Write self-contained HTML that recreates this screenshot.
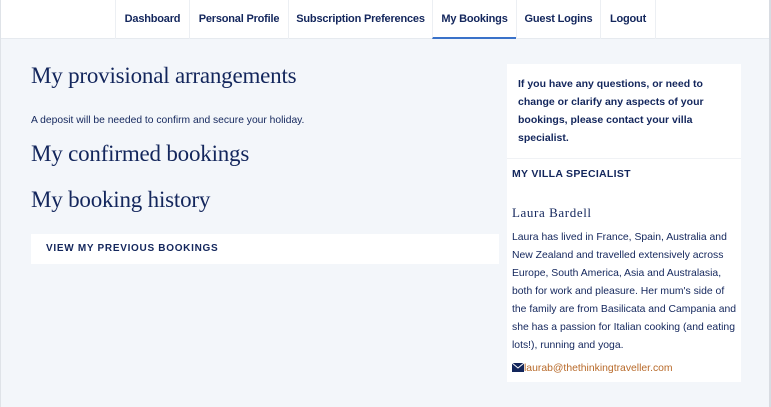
<!DOCTYPE html>
<html><head><style>
*{margin:0;padding:0;box-sizing:border-box}
body{width:771px;height:407px;background:#f3f6fa;font-family:"Liberation Sans",sans-serif;color:#13265c;position:relative;overflow:hidden;border-left:1px solid #dfe3e8;border-right:2px solid #d8dce2}
.nav{position:absolute;top:0;left:0;width:768px;height:39px;background:#fff;border-bottom:1px solid #e6eaef}
.nav a{position:absolute;top:0;height:39px;line-height:38px;font-size:11px;font-weight:bold;text-align:center;border-left:1px solid #eceff3;color:#13265c;letter-spacing:-0.2px}
.nav a.act{border-bottom:2px solid #3a72c9}
h2{position:absolute;left:30px;font-family:"Liberation Serif",serif;font-weight:normal;font-size:23px;color:#13265c;letter-spacing:-0.2px}
.p{position:absolute;left:30px;top:115px;font-size:10.3px}
.btn{position:absolute;left:30px;top:234px;width:468px;height:30px;background:#fff;font-size:10px;font-weight:bold;letter-spacing:.7px;line-height:30px;padding-left:15px}
.box{position:absolute;left:506px;top:64px;width:234px;height:318px;background:#fff}
.q{padding:11px 8px 0 11px;font-size:10.5px;font-weight:bold;line-height:18px;height:95px;border-bottom:1px solid #f0f2f5}
.sp{position:absolute;top:104px;left:5px;font-size:10.5px;font-weight:bold;letter-spacing:.3px}
.nm{position:absolute;top:141px;left:5px;font-family:"Liberation Serif",serif;font-size:13px;letter-spacing:.6px}
.bio{position:absolute;top:165px;left:5px;width:226px;font-size:10.4px;line-height:18px}
.em{position:absolute;top:299px;left:5px;font-size:10.4px;color:#b86a2a}
</style></head><body>
<div class="nav">
<a style="left:114px;width:74px">Dashboard</a>
<a style="left:188px;width:99px">Personal Profile</a>
<a style="left:287px;width:144px">Subscription Preferences</a>
<a class="act" style="left:431px;width:84px">My Bookings</a>
<a style="left:515px;width:84px">Guest Logins</a>
<a style="left:599px;width:56px;border-right:1px solid #eceff3">Logout</a>
</div>
<h2 style="top:63px">My provisional arrangements</h2>
<div class="p">A deposit will be needed to confirm and secure your holiday.</div>
<h2 style="top:141px">My confirmed bookings</h2>
<h2 style="top:187px">My booking history</h2>
<div class="btn">VIEW MY PREVIOUS BOOKINGS</div>
<div class="box">
<div class="q">If you have any questions, or need to change or clarify any aspects of your bookings, please contact your villa specialist.</div>
<div class="sp">MY VILLA SPECIALIST</div>
<div class="nm">Laura Bardell</div>
<div class="bio">Laura has lived in France, Spain, Australia and New Zealand and travelled extensively across Europe, South America, Asia and Australasia, both for work and pleasure. Her mum's side of the family are from Basilicata and Campania and she has a passion for Italian cooking (and eating lots!), running and yoga.</div>
<div class="em"><svg width="12" height="9" viewBox="0 0 12 9" style="vertical-align:-1px"><rect width="12" height="9" fill="#13265c"/><path d="M0 0L6 5L12 0" stroke="#fff" stroke-width="1" fill="none"/></svg>laurab@thethinkingtraveller.com</div>
</div>
</body></html>
